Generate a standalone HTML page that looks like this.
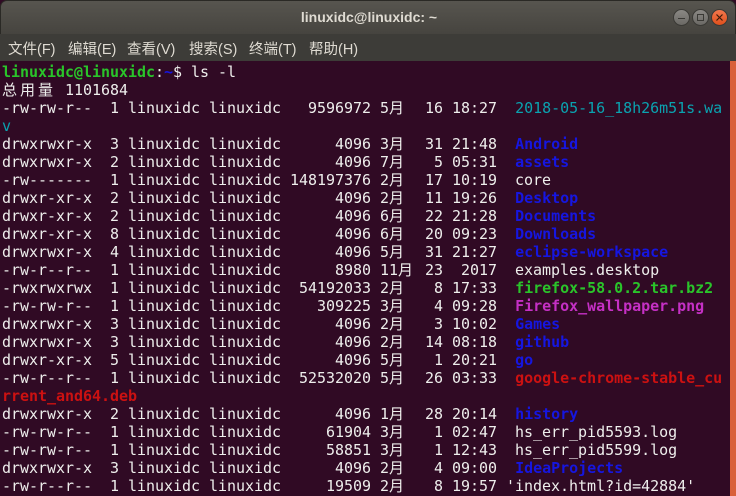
<!DOCTYPE html>
<html><head><meta charset="utf-8"><style>
*{margin:0;padding:0;box-sizing:border-box}
html,body{width:736px;height:496px;overflow:hidden;background:#300a24}
#tb{position:absolute;left:0;top:0;width:736px;height:34px;background:linear-gradient(#57554f,#46443f);border-radius:7px 7px 0 0;border:1px solid #2a2925;border-bottom:none}
#title{position:absolute;left:0;width:736px;top:8px;text-align:center;color:#dfdbd2;font:bold 14px "Liberation Sans",sans-serif}
.btn{position:absolute;top:8px;width:17px;height:17px;border-radius:50%;background:linear-gradient(#8a8884,#6b6965);border:1px solid #3a3935}
.btn.c{background:linear-gradient(#f2774d,#e0501c)}
#mb{position:absolute;left:0;top:34px;width:736px;height:27px;background:#3d3c38;color:#dfdbd2;font:14.5px "Liberation Sans","Noto Sans CJK SC",sans-serif}
#mb span{position:absolute;top:4px}
#term{position:absolute;left:2px;top:63px;font:15px/18px "DejaVu Sans Mono",monospace;letter-spacing:-0.03px;color:#eeeeec;white-space:pre}
i{display:inline-block;width:18px;font-style:normal;font-family:"Noto Sans CJK SC",sans-serif;line-height:18px;vertical-align:top}
.b{color:#1616e0;font-weight:bold}
.g{color:#2ac42a;font-weight:bold}
.m{color:#c530c5;font-weight:bold}
.r{color:#cc1111;font-weight:bold}
.c{color:#0aa3b0}
#sb{position:absolute;left:730px;top:61px;width:6px;height:435px;background:#d9603a}
</style></head><body>
<div id="tb"><div id="title">linuxidc@linuxidc: ~</div>
<div class="btn" style="left:672px"><div style="position:absolute;left:4px;top:8px;width:7px;height:1px;background:#3a3935"></div></div>
<div class="btn" style="left:691px"><div style="position:absolute;left:4px;top:4px;width:7px;height:7px;border:1px solid #3a3935"></div></div>
<div class="btn c" style="left:710px"><svg width="15" height="15" style="position:absolute;left:0;top:0"><path d="M4.5 4.5L10.5 10.5M10.5 4.5L4.5 10.5" stroke="#3a1a0a" stroke-width="1.2"/></svg></div>
</div>
<div id="mb"><span style="left:8px">文件(F)</span><span style="left:68px">编辑(E)</span><span style="left:127px">查看(V)</span><span style="left:189px">搜索(S)</span><span style="left:249px">终端(T)</span><span style="left:309px">帮助(H)</span></div>
<div id="term"><span class="g">linuxidc@linuxidc</span>:<span class="b">~</span>$ ls -l
<i>总</i><i>用</i><i>量</i> 1101684
-rw-rw-r--  1 linuxidc linuxidc   9596972 5<i>月</i>  16 18:27  <span class="c">2018-05-16_18h26m51s.wa</span>
<span class="c">v</span>
drwxrwxr-x  3 linuxidc linuxidc      4096 3<i>月</i>  31 21:48  <span class="b">Android</span>
drwxrwxr-x  2 linuxidc linuxidc      4096 7<i>月</i>   5 05:31  <span class="b">assets</span>
-rw-------  1 linuxidc linuxidc 148197376 2<i>月</i>  17 10:19  core
drwxr-xr-x  2 linuxidc linuxidc      4096 2<i>月</i>  11 19:26  <span class="b">Desktop</span>
drwxr-xr-x  2 linuxidc linuxidc      4096 6<i>月</i>  22 21:28  <span class="b">Documents</span>
drwxr-xr-x  8 linuxidc linuxidc      4096 6<i>月</i>  20 09:23  <span class="b">Downloads</span>
drwxrwxr-x  4 linuxidc linuxidc      4096 5<i>月</i>  31 21:27  <span class="b">eclipse-workspace</span>
-rw-r--r--  1 linuxidc linuxidc      8980 11<i>月</i> 23  2017  examples.desktop
-rwxrwxrwx  1 linuxidc linuxidc  54192033 2<i>月</i>   8 17:33  <span class="g">firefox-58.0.2.tar.bz2</span>
-rw-rw-r--  1 linuxidc linuxidc    309225 3<i>月</i>   4 09:28  <span class="m">Firefox_wallpaper.png</span>
drwxrwxr-x  3 linuxidc linuxidc      4096 2<i>月</i>   3 10:02  <span class="b">Games</span>
drwxrwxr-x  3 linuxidc linuxidc      4096 2<i>月</i>  14 08:18  <span class="b">github</span>
drwxr-xr-x  5 linuxidc linuxidc      4096 5<i>月</i>   1 20:21  <span class="b">go</span>
-rw-r--r--  1 linuxidc linuxidc  52532020 5<i>月</i>  26 03:33  <span class="r">google-chrome-stable_cu</span>
<span class="r">rrent_and64.deb</span>
drwxrwxr-x  2 linuxidc linuxidc      4096 1<i>月</i>  28 20:14  <span class="b">history</span>
-rw-rw-r--  1 linuxidc linuxidc     61904 3<i>月</i>   1 02:47  hs_err_pid5593.log
-rw-rw-r--  1 linuxidc linuxidc     58851 3<i>月</i>   1 12:43  hs_err_pid5599.log
drwxrwxr-x  3 linuxidc linuxidc      4096 2<i>月</i>   4 09:00  <span class="b">IdeaProjects</span>
-rw-r--r--  1 linuxidc linuxidc     19509 2<i>月</i>   8 19:57 'index.html?id=42884'</div>
<div id="sb"></div>
</body></html>
